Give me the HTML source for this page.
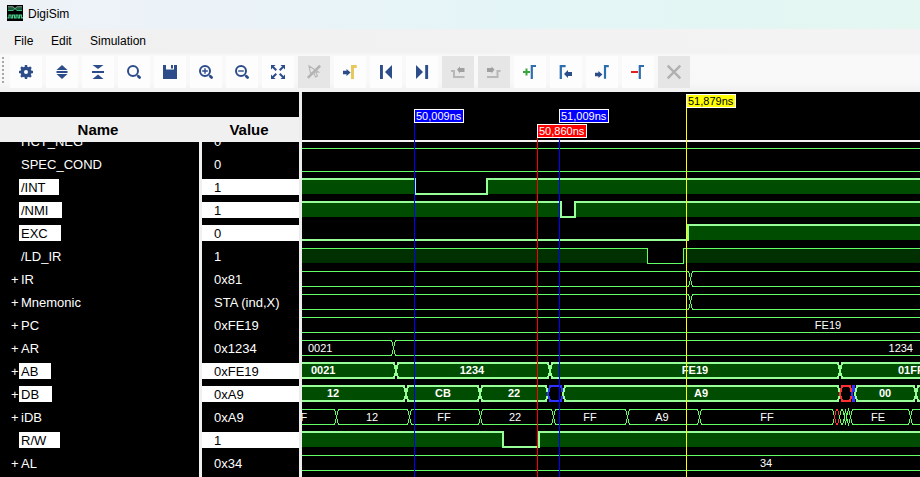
<!DOCTYPE html><html><head><meta charset="utf-8"><style>
*{margin:0;padding:0;box-sizing:border-box}
html,body{width:920px;height:477px;overflow:hidden;background:#000;font-family:"Liberation Sans", sans-serif}
.abs{position:absolute}
#title{left:0;top:0;width:920px;height:29px;background:linear-gradient(90deg,#eef2f7 0%,#eaf3f8 30%,#e4f5f7 55%,#e3f6f3 80%,#e5f7f1 100%)}
#menu{left:0;top:29px;width:920px;height:24px;background:linear-gradient(90deg,#f0f0f0,#f3f3f3)}
#tb{left:0;top:53px;width:920px;height:39px;background:linear-gradient(#f3f3f3 0px,#f9f9f9 3px,#f8f8f8 30px,#f0f0f0 39px)}
.btn{position:absolute;top:3px;width:32px;height:32px;background:#fdfdfd}
.btn.dis{background:#e6e6e6}
.btn svg{position:absolute;left:0;top:0}
.mt{position:absolute;top:0;font-size:12px;line-height:24px;color:#000}
.nm{position:absolute;font-size:13px;color:#fff;white-space:nowrap}
.vl{position:absolute;font-size:13px;color:#fff;white-space:nowrap}

</style></head><body>
<div id="title" class="abs">
<svg class="abs" style="left:7px;top:5px" width="16" height="16" viewBox="0 0 16 16"><rect width="16" height="16" fill="#000"/><path d="M1 2.2 H6 L8 3.8 L10 2.2 H15 V4.8 H10 L8 3.8 L6 4.8 H1Z" fill="#17603c"/><path d="M1 1.8 H6 L8 3.6 L10 1.8 H15" stroke="#9aa8a0" stroke-width="1" fill="none"/><path d="M1 5.4 H6 L8 3.6 L10 5.4 H15" stroke="#4ccf8e" stroke-width="1" fill="none"/><path d="M0.5 12.8 H2 V10 H4 V12.8 H5.6 V10 H7.5 V12.8 H9.1 V10 H11 V12.8 H12.6 V10 H14.5 V12.8 H16" stroke="#4ccf8e" stroke-width="1.2" fill="none"/></svg>
<div class="abs" style="left:28px;top:1px;font-size:12px;line-height:27px;color:#000">DigiSim</div>
</div>
<div id="menu" class="abs">
<div class="mt" style="left:14px;top:0px">File</div>
<div class="mt" style="left:51px;top:0px">Edit</div>
<div class="mt" style="left:90px;top:0px">Simulation</div>
</div>
<div id="tb" class="abs">
<div class="abs" style="left:2px;top:4px;width:2px;height:2px;background:#a8a8a8"></div>
<div class="abs" style="left:2px;top:8px;width:2px;height:2px;background:#a8a8a8"></div>
<div class="abs" style="left:2px;top:12px;width:2px;height:2px;background:#a8a8a8"></div>
<div class="abs" style="left:2px;top:16px;width:2px;height:2px;background:#a8a8a8"></div>
<div class="abs" style="left:2px;top:20px;width:2px;height:2px;background:#a8a8a8"></div>
<div class="abs" style="left:2px;top:24px;width:2px;height:2px;background:#a8a8a8"></div>
<div class="abs" style="left:2px;top:28px;width:2px;height:2px;background:#a8a8a8"></div>
<div class="btn" style="left:10px"><svg width="32" height="32" viewBox="0 0 32 32"><g fill="#2c4c8a"><circle cx="16" cy="16" r="5.6"/><rect x="14.8" y="9" width="2.4" height="3" transform="rotate(0 16 16)"/><rect x="14.8" y="9" width="2.4" height="3" transform="rotate(45 16 16)"/><rect x="14.8" y="9" width="2.4" height="3" transform="rotate(90 16 16)"/><rect x="14.8" y="9" width="2.4" height="3" transform="rotate(135 16 16)"/><rect x="14.8" y="9" width="2.4" height="3" transform="rotate(180 16 16)"/><rect x="14.8" y="9" width="2.4" height="3" transform="rotate(225 16 16)"/><rect x="14.8" y="9" width="2.4" height="3" transform="rotate(270 16 16)"/><rect x="14.8" y="9" width="2.4" height="3" transform="rotate(315 16 16)"/><circle cx="16" cy="16" r="2" fill="#fdfdfd"/></g></svg></div>
<div class="btn" style="left:46px"><svg width="32" height="32" viewBox="0 0 32 32"><g fill="#2c4c8a"><path d="M16 9 L21.5 14 H10.5Z"/><rect x="10.5" y="15" width="11" height="2"/><path d="M16 23 L21.5 18 H10.5Z"/></g></svg></div>
<div class="btn" style="left:82px"><svg width="32" height="32" viewBox="0 0 32 32"><g fill="#2c4c8a"><path d="M10.5 9 H21.5 L16 13Z"/><rect x="10" y="15" width="12" height="2"/><path d="M10.5 23 H21.5 L16 18.5Z"/></g></svg></div>
<div class="btn" style="left:118px"><svg width="32" height="32" viewBox="0 0 32 32"><g><circle cx="15" cy="15" r="5" stroke="#2c4c8a" stroke-width="2" fill="none"/><path d="M20.3 20.3 L21.6 21.6" stroke="#2c4c8a" stroke-width="2.8" stroke-linecap="round"/></g></svg></div>
<div class="btn" style="left:154px"><svg width="32" height="32" viewBox="0 0 32 32"><g fill="#2c4c8a"><path d="M9 9 H12 V13.5 H20 V9 H23 V23 H9Z"/><rect x="17" y="9" width="2" height="3.5"/></g></svg></div>
<div class="btn" style="left:190px"><svg width="32" height="32" viewBox="0 0 32 32"><g><circle cx="15" cy="15" r="5" stroke="#2c4c8a" stroke-width="2" fill="none"/><path d="M20.3 20.3 L21.6 21.6" stroke="#2c4c8a" stroke-width="2.8" stroke-linecap="round"/><path d="M12.2 15 H17.8 M15 12.2 V17.8" stroke="#2c4c8a" stroke-width="1.4"/></g></svg></div>
<div class="btn" style="left:226px"><svg width="32" height="32" viewBox="0 0 32 32"><g><circle cx="15" cy="15" r="5" stroke="#2c4c8a" stroke-width="2" fill="none"/><path d="M20.3 20.3 L21.6 21.6" stroke="#2c4c8a" stroke-width="2.8" stroke-linecap="round"/><path d="M12.2 15 H17.8" stroke="#2c4c8a" stroke-width="1.4"/></g></svg></div>
<div class="btn" style="left:262px"><svg width="32" height="32" viewBox="0 0 32 32"><g fill="#2c4c8a" stroke="#2c4c8a"><path d="M14.3 14.3 L11 11 M17.7 14.3 L21 11 M14.3 17.7 L11 21 M17.7 17.7 L21 21" stroke-width="2"/><path d="M9 9 H13.5 L9 13.5Z M23 9 H18.5 L23 13.5Z M9 23 H13.5 L9 18.5Z M23 23 H18.5 L23 18.5Z" stroke="none"/></g></svg></div>
<div class="btn dis" style="left:298px"><svg width="32" height="32" viewBox="0 0 32 32"><g stroke="#b4b4b4" fill="none"><path d="M11 10 L12.6 17.6 L15.5 16.5 L17.5 21 L19.5 20 L17.8 16.2 L20.6 16 Z" stroke-width="1.1"/><path d="M9.8 21.9 L22.1 9.8" stroke-width="2.6"/></g></svg></div>
<div class="btn" style="left:334px"><svg width="32" height="32" viewBox="0 0 32 32"><g><path d="M9 14.8 H12.5 V13 L16.6 16.5 L12.5 20 V18.2 H9Z" fill="#2c4c8a"/><path d="M18.5 23 V10.5 H22.7" stroke="#e6c95a" stroke-width="3" fill="none"/></g></svg></div>
<div class="btn" style="left:370px"><svg width="32" height="32" viewBox="0 0 32 32"><g fill="#2c4c8a"><rect x="10" y="9" width="2.9" height="14"/><path d="M22 9 V23 L15 16Z"/></g></svg></div>
<div class="btn" style="left:406px"><svg width="32" height="32" viewBox="0 0 32 32"><g fill="#2c4c8a"><rect x="19.2" y="9" width="2.9" height="14"/><path d="M10 9 V23 L17 16Z"/></g></svg></div>
<div class="btn dis" style="left:442px"><svg width="32" height="32" viewBox="0 0 32 32"><g><path d="M9 15 H12 V21 H22.5" stroke="#b8b8b8" stroke-width="2" fill="none"/><path d="M15 13.5 L18 10.5 V12 H22.5 V16 H18 V17.5Z" fill="#a0a0a0"/></g></svg></div>
<div class="btn dis" style="left:478px"><svg width="32" height="32" viewBox="0 0 32 32"><g><path d="M22.5 15 H19.5 V21 H9" stroke="#b8b8b8" stroke-width="2" fill="none"/><path d="M16.5 13.5 L13.5 10.5 V12 H9 V16 H13.5 V17.5Z" fill="#a0a0a0" transform="translate(0,0)"/></g></svg></div>
<div class="btn" style="left:514px"><svg width="32" height="32" viewBox="0 0 32 32"><g><path d="M9 16 H16 M12.5 12.5 V19.5" stroke="#3aa53a" stroke-width="2"/><path d="M17.8 23 V10 H22" stroke="#2f6eac" stroke-width="2.2" fill="none"/></g></svg></div>
<div class="btn" style="left:550px"><svg width="32" height="32" viewBox="0 0 32 32"><g><path d="M10.8 23 V10.1 H15.6" stroke="#2f6eac" stroke-width="2.3" fill="none"/><path d="M14 18 L18 14 V16 H22 V20 H18 V22Z" fill="#2c4c8a"/></g></svg></div>
<div class="btn" style="left:586px"><svg width="32" height="32" viewBox="0 0 32 32"><g><path d="M9 16.8 H12.4 V15 L16.4 18.5 L12.4 22 V20.2 H9Z" fill="#2c4c8a"/><path d="M19 22.7 V10.2 H22.8" stroke="#2f6eac" stroke-width="2.2" fill="none"/></g></svg></div>
<div class="btn" style="left:622px"><svg width="32" height="32" viewBox="0 0 32 32"><g><path d="M9 16 H16" stroke="#e02020" stroke-width="2"/><path d="M17.8 23 V10 H22" stroke="#2f6eac" stroke-width="2.2" fill="none"/></g></svg></div>
<div class="btn dis" style="left:658px"><svg width="32" height="32" viewBox="0 0 32 32"><g><path d="M9.7 9.7 L22.3 22.3 M22.3 9.7 L9.7 22.3" stroke="#b0b0b0" stroke-width="2.4"/></g></svg></div>
</div>
<div class="abs" style="left:0;top:92px;width:920px;height:385px;background:#000"></div>
<div class="abs" style="left:0;top:117px;width:299px;height:25px;background:#f0f0f0"></div>
<div class="abs" style="left:0;top:118px;width:199px;height:24px;text-align:center;font-weight:bold;font-size:15px;line-height:24px;color:#000;padding-right:3px">Name</div>
<div class="abs" style="left:202px;top:118px;width:97px;height:24px;text-align:center;font-weight:bold;font-size:15px;line-height:24px;color:#000;padding-right:3px">Value</div>
<div class="abs" style="left:0;top:142px;width:299px;height:335px;overflow:hidden"><div class="abs" style="left:0;top:-1px;width:299px;height:336px">
<div class="nm" style="left:21px;top:-7px;line-height:16px;color:#fff">HCT_NEG</div>
<div class="vl" style="left:214px;top:-7px;line-height:16px;color:#fff">0</div>
<div class="nm" style="left:21px;top:16px;line-height:16px;color:#fff">SPEC_COND</div>
<div class="vl" style="left:214px;top:16px;line-height:16px;color:#fff">0</div>
<div class="abs" style="left:19px;top:38px;width:40px;height:16px;background:#fff"></div>
<div class="abs" style="left:202px;top:38px;width:97px;height:16px;background:#fff"></div>
<div class="nm" style="left:21px;top:39px;line-height:16px;color:#000">/INT</div>
<div class="vl" style="left:214px;top:39px;line-height:16px;color:#000">1</div>
<div class="abs" style="left:19px;top:61px;width:43px;height:16px;background:#fff"></div>
<div class="abs" style="left:202px;top:61px;width:97px;height:16px;background:#fff"></div>
<div class="nm" style="left:21px;top:62px;line-height:16px;color:#000">/NMI</div>
<div class="vl" style="left:214px;top:62px;line-height:16px;color:#000">1</div>
<div class="abs" style="left:19px;top:84px;width:42px;height:16px;background:#fff"></div>
<div class="abs" style="left:202px;top:84px;width:97px;height:16px;background:#fff"></div>
<div class="nm" style="left:21px;top:85px;line-height:16px;color:#000">EXC</div>
<div class="vl" style="left:214px;top:85px;line-height:16px;color:#000">0</div>
<div class="nm" style="left:21px;top:108px;line-height:16px;color:#fff">/LD_IR</div>
<div class="vl" style="left:214px;top:108px;line-height:16px;color:#fff">1</div>
<div class="nm" style="left:11px;top:131px;line-height:16px">+</div>
<div class="nm" style="left:21px;top:131px;line-height:16px;color:#fff">IR</div>
<div class="vl" style="left:214px;top:131px;line-height:16px;color:#fff">0x81</div>
<div class="nm" style="left:11px;top:154px;line-height:16px">+</div>
<div class="nm" style="left:21px;top:154px;line-height:16px;color:#fff">Mnemonic</div>
<div class="vl" style="left:214px;top:154px;line-height:16px;color:#fff">STA (ind,X)</div>
<div class="nm" style="left:11px;top:177px;line-height:16px">+</div>
<div class="nm" style="left:21px;top:177px;line-height:16px;color:#fff">PC</div>
<div class="vl" style="left:214px;top:177px;line-height:16px;color:#fff">0xFE19</div>
<div class="nm" style="left:11px;top:200px;line-height:16px">+</div>
<div class="nm" style="left:21px;top:200px;line-height:16px;color:#fff">AR</div>
<div class="vl" style="left:214px;top:200px;line-height:16px;color:#fff">0x1234</div>
<div class="abs" style="left:19px;top:222px;width:32px;height:16px;background:#fff"></div>
<div class="abs" style="left:202px;top:222px;width:97px;height:16px;background:#fff"></div>
<div class="nm" style="left:11px;top:223px;line-height:16px">+</div>
<div class="nm" style="left:21px;top:223px;line-height:16px;color:#000">AB</div>
<div class="vl" style="left:214px;top:223px;line-height:16px;color:#000">0xFE19</div>
<div class="abs" style="left:19px;top:245px;width:33px;height:16px;background:#fff"></div>
<div class="abs" style="left:202px;top:245px;width:97px;height:16px;background:#fff"></div>
<div class="nm" style="left:11px;top:246px;line-height:16px">+</div>
<div class="nm" style="left:21px;top:246px;line-height:16px;color:#000">DB</div>
<div class="vl" style="left:214px;top:246px;line-height:16px;color:#000">0xA9</div>
<div class="nm" style="left:11px;top:269px;line-height:16px">+</div>
<div class="nm" style="left:21px;top:269px;line-height:16px;color:#fff">iDB</div>
<div class="vl" style="left:214px;top:269px;line-height:16px;color:#fff">0xA9</div>
<div class="abs" style="left:19px;top:291px;width:41px;height:16px;background:#fff"></div>
<div class="abs" style="left:202px;top:291px;width:97px;height:16px;background:#fff"></div>
<div class="nm" style="left:21px;top:292px;line-height:16px;color:#000">R/W</div>
<div class="vl" style="left:214px;top:292px;line-height:16px;color:#000">1</div>
<div class="nm" style="left:11px;top:315px;line-height:16px">+</div>
<div class="nm" style="left:21px;top:315px;line-height:16px;color:#fff">AL</div>
<div class="vl" style="left:214px;top:315px;line-height:16px;color:#fff">0x34</div>
</div></div>
<div class="abs" style="left:199px;top:142px;width:3px;height:335px;background:#f0f0f0"></div>
<div class="abs" style="left:299px;top:92px;width:3px;height:385px;background:#ececec"></div>
<svg class="abs" style="left:0;top:0" width="920" height="477" viewBox="0 0 920 477" font-family='"Liberation Sans", sans-serif'><defs><clipPath id="wc"><rect x="302" y="142" width="618" height="335"/></clipPath></defs><rect x="302" y="140" width="618" height="2" fill="#f4f4f4"/><g clip-path="url(#wc)" shape-rendering="crispEdges"><path d="M302 148.5 H920" stroke="#64ff64" stroke-width="1" fill="none"/><path d="M302 171.5 H920" stroke="#64ff64" stroke-width="1" fill="none"/><rect x="302" y="179" width="112" height="15" fill="#004c00"/><rect x="486" y="179" width="434" height="15" fill="#004c00"/><path d="M302 179 H415 V194 H487 V179 H920" stroke="#98ff98" stroke-width="2" fill="none"/><rect x="302" y="202" width="258" height="15" fill="#004c00"/><rect x="574" y="202" width="346" height="15" fill="#004c00"/><path d="M302 202 H561 V217 H575 V202 H920" stroke="#98ff98" stroke-width="2" fill="none"/><rect x="687" y="225" width="233" height="15" fill="#004c00"/><path d="M302 240 H688 V225 H920" stroke="#98ff98" stroke-width="2" fill="none"/><rect x="302" y="248" width="345" height="15" fill="#003000"/><rect x="683" y="248" width="237" height="15" fill="#003000"/><path d="M302 248.5 H647.5 V263.5 H683.5 V248.5 H920" stroke="#64ff64" stroke-width="1" fill="none"/><path d="M292.5 279 L294.5 271.5 H688.5 L690.5 279 L688.5 286.5 H294.5Z" stroke="#64ff64" stroke-width="1" fill="none"/><path d="M690.5 279 L692.5 271.5 H928.5 L930.5 279 L928.5 286.5 H692.5Z" stroke="#64ff64" stroke-width="1" fill="none"/><path d="M292.5 302 L294.5 294.5 H688.5 L690.5 302 L688.5 309.5 H294.5Z" stroke="#64ff64" stroke-width="1" fill="none"/><path d="M690.5 302 L692.5 294.5 H928.5 L930.5 302 L928.5 309.5 H692.5Z" stroke="#64ff64" stroke-width="1" fill="none"/><path d="M292.5 325 L294.5 317.5 H928.5 L930.5 325 L928.5 332.5 H294.5Z" stroke="#64ff64" stroke-width="1" fill="none"/><text x="828" y="329" fill="#fff" font-size="11" font-weight="normal" text-anchor="middle">FE19</text><path d="M292.5 348 L294.5 340.5 H391.5 L393.5 348 L391.5 355.5 H294.5Z" stroke="#64ff64" stroke-width="1" fill="none"/><path d="M393.5 348 L395.5 340.5 H928.5 L930.5 348 L928.5 355.5 H395.5Z" stroke="#64ff64" stroke-width="1" fill="none"/><text x="308" y="352" fill="#fff" font-size="11" font-weight="normal" text-anchor="start">0021</text><text x="913" y="352" fill="#fff" font-size="11" font-weight="normal" text-anchor="end">1234</text><path d="M292 371 L294 363 H394 L396 371 L394 378 H294Z" stroke="#98ff98" stroke-width="2" fill="#004c00"/><path d="M396 371 L398 363 H548 L550 371 L548 378 H398Z" stroke="#98ff98" stroke-width="2" fill="#004c00"/><path d="M550 371 L552 363 H838 L840 371 L838 378 H552Z" stroke="#98ff98" stroke-width="2" fill="#004c00"/><path d="M840 371 L842 363 H928 L930 371 L928 378 H842Z" stroke="#98ff98" stroke-width="2" fill="#004c00"/><text x="311" y="374" fill="#fff" font-size="11" font-weight="bold" text-anchor="start">0021</text><text x="472" y="374" fill="#fff" font-size="11" font-weight="bold" text-anchor="middle">1234</text><text x="695" y="374" fill="#fff" font-size="11" font-weight="bold" text-anchor="middle">FE19</text><text x="898" y="374" fill="#fff" font-size="11" font-weight="bold" text-anchor="start">01FF</text><path d="M292 394 L294 386 H404 L406 394 L404 401 H294Z" stroke="#98ff98" stroke-width="2" fill="#004c00"/><path d="M406 394 L408 386 H478 L480 394 L478 401 H408Z" stroke="#98ff98" stroke-width="2" fill="#004c00"/><path d="M480 394 L482 386 H546 L548 394 L546 401 H482Z" stroke="#98ff98" stroke-width="2" fill="#004c00"/><path d="M548 394 L550 386 H561 L563 394 L561 401 H550Z" stroke="#3030ff" stroke-width="2" fill="none"/><path d="M563 394 L565 386 H838 L840 394 L838 401 H565Z" stroke="#98ff98" stroke-width="2" fill="#004c00"/><path d="M840 394 L842 386 H850 L852 394 L850 401 H842Z" stroke="#ff3030" stroke-width="2" fill="none"/><path d="M852 394 L854 386 H853 L855 394 L853 401 H854Z" stroke="#3030ff" stroke-width="2" fill="none"/><path d="M855 394 L857 386 H914 L916 394 L914 401 H857Z" stroke="#98ff98" stroke-width="2" fill="#004c00"/><path d="M916 394 L918 386 H928 L930 394 L928 401 H918Z" stroke="#98ff98" stroke-width="2" fill="#004c00"/><text x="333" y="397" fill="#fff" font-size="11" font-weight="bold" text-anchor="middle">12</text><text x="443" y="397" fill="#fff" font-size="11" font-weight="bold" text-anchor="middle">CB</text><text x="514" y="397" fill="#fff" font-size="11" font-weight="bold" text-anchor="middle">22</text><text x="701" y="397" fill="#fff" font-size="11" font-weight="bold" text-anchor="middle">A9</text><text x="885" y="397" fill="#fff" font-size="11" font-weight="bold" text-anchor="middle">00</text><path d="M292.5 417 L294.5 409.5 H334.5 L336.5 417 L334.5 424.5 H294.5Z" stroke="#64ff64" stroke-width="1" fill="none"/><path d="M336.5 417 L338.5 409.5 H407.5 L409.5 417 L407.5 424.5 H338.5Z" stroke="#64ff64" stroke-width="1" fill="none"/><path d="M409.5 417 L411.5 409.5 H478.5 L480.5 417 L478.5 424.5 H411.5Z" stroke="#64ff64" stroke-width="1" fill="none"/><path d="M480.5 417 L482.5 409.5 H551.5 L553.5 417 L551.5 424.5 H482.5Z" stroke="#64ff64" stroke-width="1" fill="none"/><path d="M553.5 417 L555.5 409.5 H625.5 L627.5 417 L625.5 424.5 H555.5Z" stroke="#64ff64" stroke-width="1" fill="none"/><path d="M627.5 417 L629.5 409.5 H697.5 L699.5 417 L697.5 424.5 H629.5Z" stroke="#64ff64" stroke-width="1" fill="none"/><path d="M699.5 417 L701.5 409.5 H832.5 L834.5 417 L832.5 424.5 H701.5Z" stroke="#64ff64" stroke-width="1" fill="none"/><path d="M834.5 417 L836.5 409.5 H837.5 L839.5 417 L837.5 424.5 H836.5Z" stroke="#ff3030" stroke-width="1" fill="none"/><path d="M839.5 417 L841.5 409.5 H842.5 L844.5 417 L842.5 424.5 H841.5Z" stroke="#64ff64" stroke-width="1" fill="none"/><path d="M844.5 417 L845.5 409.5 H845.5 L846.5 417 L845.5 424.5 H845.5Z" stroke="#64ff64" stroke-width="1" fill="none"/><path d="M846.5 417 L848.5 409.5 H848.5 L850.5 417 L848.5 424.5 H848.5Z" stroke="#64ff64" stroke-width="1" fill="none"/><path d="M850.5 417 L852.5 409.5 H908.5 L910.5 417 L908.5 424.5 H852.5Z" stroke="#64ff64" stroke-width="1" fill="none"/><path d="M910.5 417 L912.5 409.5 H928.5 L930.5 417 L928.5 424.5 H912.5Z" stroke="#64ff64" stroke-width="1" fill="none"/><text x="300.5" y="421" fill="#fff" font-size="11" font-weight="normal" text-anchor="middle">FF</text><text x="372" y="421" fill="#fff" font-size="11" font-weight="normal" text-anchor="middle">12</text><text x="444" y="421" fill="#fff" font-size="11" font-weight="normal" text-anchor="middle">FF</text><text x="515" y="421" fill="#fff" font-size="11" font-weight="normal" text-anchor="middle">22</text><text x="590" y="421" fill="#fff" font-size="11" font-weight="normal" text-anchor="middle">FF</text><text x="662" y="421" fill="#fff" font-size="11" font-weight="normal" text-anchor="middle">A9</text><text x="767" y="421" fill="#fff" font-size="11" font-weight="normal" text-anchor="middle">FF</text><text x="878" y="421" fill="#fff" font-size="11" font-weight="normal" text-anchor="middle">FE</text><rect x="302" y="432" width="200" height="15" fill="#004c00"/><rect x="538" y="432" width="382" height="15" fill="#004c00"/><path d="M302 432 H503 V447 H539 V432 H920" stroke="#98ff98" stroke-width="2" fill="none"/><path d="M292.5 463 L294.5 455.5 H928.5 L930.5 463 L928.5 470.5 H294.5Z" stroke="#64ff64" stroke-width="1" fill="none"/><text x="766" y="467" fill="#fff" font-size="11" font-weight="normal" text-anchor="middle">34</text></g><g shape-rendering="crispEdges"><rect x="414" y="123" width="1" height="354" fill="#0000ff"/><rect x="559" y="123" width="1" height="354" fill="#0000ff"/><rect x="537" y="138" width="1" height="339" fill="#ff0000"/><rect x="686" y="108" width="1" height="369" fill="#ffff00"/><rect x="414.5" y="109.5" width="49" height="13" fill="#0000ff" stroke="#fff" stroke-width="1"/><text x="416" y="120" fill="#fff" font-size="11" shape-rendering="auto">50,009ns</text><rect x="559.5" y="109.5" width="49" height="13" fill="#0000ff" stroke="#fff" stroke-width="1"/><text x="561" y="120" fill="#fff" font-size="11" shape-rendering="auto">51,009ns</text><rect x="537.5" y="124.5" width="49" height="13" fill="#ff0000" stroke="#fff" stroke-width="1"/><text x="539" y="135" fill="#fff" font-size="11" shape-rendering="auto">50,860ns</text><rect x="686.5" y="94.5" width="49" height="13" fill="#ffff00" stroke="#fff" stroke-width="1"/><text x="688" y="105" fill="#000" font-size="11" shape-rendering="auto">51,879ns</text></g></svg>
</body></html>
